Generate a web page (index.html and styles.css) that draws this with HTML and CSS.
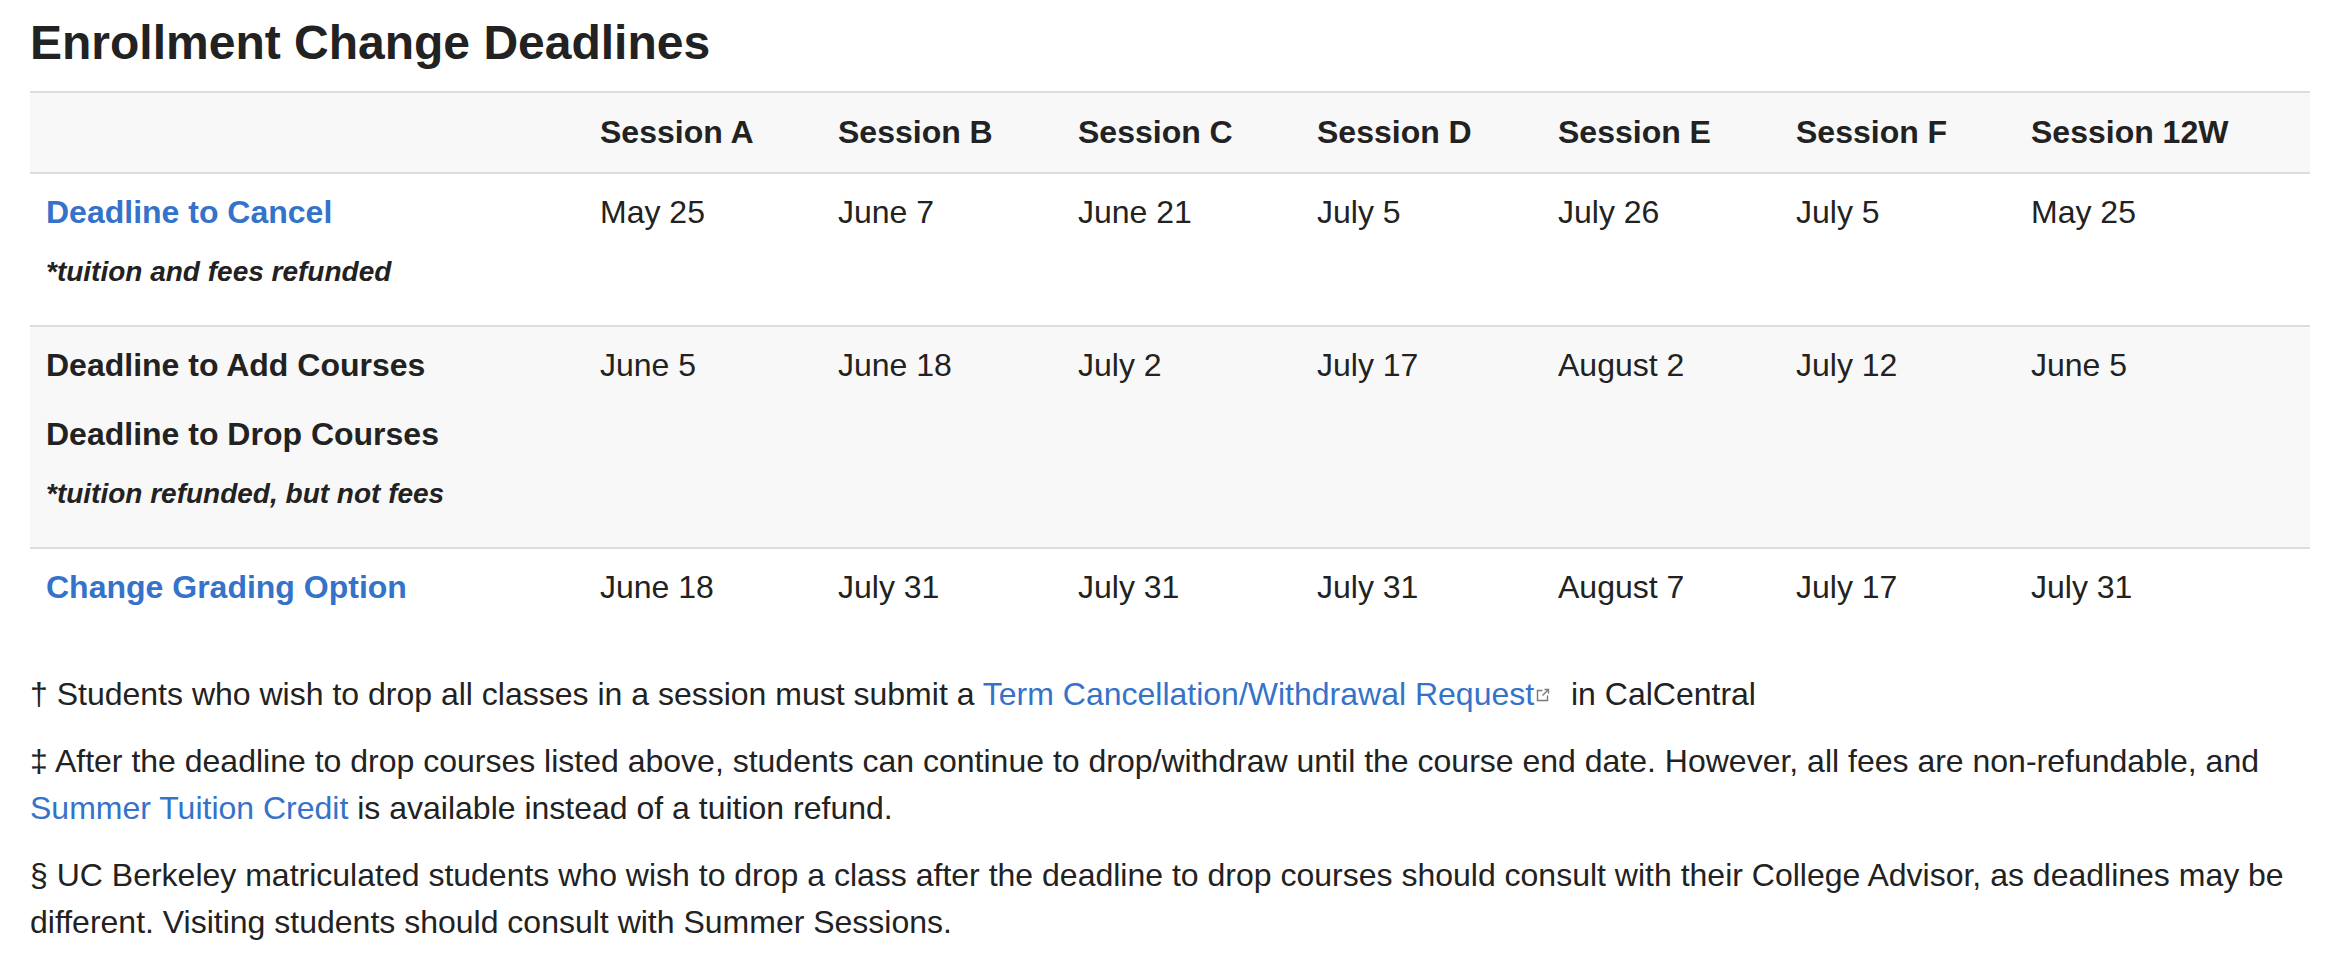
FILE: index.html
```html
<!DOCTYPE html>
<html lang="en">
<head>
<meta charset="utf-8">
<title>Enrollment Change Deadlines</title>
<link rel="stylesheet" href="styles.css">
</head>
<body>
<main class="page">
  <h2 class="title">Enrollment Change Deadlines</h2>
  <table class="deadlines">
    <colgroup>
      <col class="c-label">
      <col class="c-a"><col class="c-b"><col class="c-c"><col class="c-d"><col class="c-e"><col class="c-f"><col class="c-12w">
    </colgroup>
    <thead>
      <tr>
        <th></th>
        <th>Session A</th>
        <th>Session B</th>
        <th>Session C</th>
        <th>Session D</th>
        <th>Session E</th>
        <th>Session F</th>
        <th>Session 12W</th>
      </tr>
    </thead>
    <tbody>
      <tr class="row-first">
        <td>
          <p class="label"><a href="#" class="link">Deadline to Cancel</a></p>
          <p class="note">*tuition and fees refunded</p>
        </td>
        <td>May 25</td>
        <td>June 7</td>
        <td>June 21</td>
        <td>July 5</td>
        <td>July 26</td>
        <td>July 5</td>
        <td>May 25</td>
      </tr>
      <tr class="row-striped">
        <td>
          <p class="label">Deadline to Add Courses</p>
          <p class="label label-next">Deadline to Drop Courses</p>
          <p class="note">*tuition refunded, but not fees</p>
        </td>
        <td>June 5</td>
        <td>June 18</td>
        <td>July 2</td>
        <td>July 17</td>
        <td>August 2</td>
        <td>July 12</td>
        <td>June 5</td>
      </tr>
      <tr class="row-last">
        <td>
          <p class="label"><a href="#" class="link">Change Grading Option</a></p>
        </td>
        <td>June 18</td>
        <td>July 31</td>
        <td>July 31</td>
        <td>July 31</td>
        <td>August 7</td>
        <td>July 17</td>
        <td>July 31</td>
      </tr>
    </tbody>
  </table>

  <p class="footnote">† Students who wish to drop all classes in a session must submit a <a href="#" class="link-plain">Term Cancellation/Withdrawal Request<svg class="ext-icon" viewBox="0 0 14 14" width="14" height="14" aria-hidden="true"><path d="M6.5 2.5H1.5v10h10v-5" fill="none" stroke="#7a7a7a" stroke-width="1.4"/><path d="M8.5 1.5h4v4" fill="none" stroke="#7a7a7a" stroke-width="1.4"/><path d="M12.5 1.5L6.5 7.5" fill="none" stroke="#7a7a7a" stroke-width="1.4"/></svg></a> in CalCentral</p>
  <p class="footnote">‡ After the deadline to drop courses listed above, students can continue to drop/withdraw until the course end date. However, all fees are non-refundable, and <a href="#" class="link-plain">Summer Tuition Credit</a> is available instead of a tuition refund.</p>
  <p class="footnote">§ UC Berkeley matriculated students who wish to drop a class after the deadline to drop courses should consult with their College Advisor, as deadlines may be different. Visiting students should consult with Summer Sessions.</p>
</main>
</body>
</html>
```

FILE: styles.css
```css
html, body {
  margin: 0;
  padding: 0;
  background: #ffffff;
}

body {
  font-family: "Liberation Sans", Arial, Helvetica, sans-serif;
  font-size: 32px;
  line-height: 47px;
  color: #222222;
}

.page {
  padding: 17px 22px 0 30px;
  width: 2280px;
}

.title {
  margin: 0 0 21px 0;
  font-size: 48px;
  line-height: 52.8px;
  font-weight: bold;
  color: #222222;
}

.deadlines {
  width: 2280px;
  table-layout: fixed;
  border-collapse: separate;
  border-spacing: 0;
  margin: 0 0 47px 0;
}

.c-label { width: 554px; }
.c-a { width: 238px; }
.c-b { width: 240px; }
.c-c { width: 239px; }
.c-d { width: 241px; }
.c-e { width: 238px; }
.c-f { width: 235px; }
.c-12w { width: 295px; }

.deadlines th {
  text-align: left;
  font-weight: bold;
  font-size: 32px;
  line-height: 48px;
  padding: 15px 16px 16px 16px;
  background: #f8f8f8;
  border-top: 2px solid #dddddd;
  border-bottom: 2px solid #dddddd;
  vertical-align: top;
}

.deadlines td {
  font-size: 32px;
  line-height: 48px;
  padding: 14px 16px 13px 16px;
  vertical-align: top;
}

.row-striped td,
.row-last td {
  border-top: 2px solid #dddddd;
}

.row-striped td {
  background: #f8f8f8;
}

.label {
  margin: 0;
  font-weight: bold;
  line-height: 48px;
}

.label-next {
  margin-top: 21px;
}

.note {
  margin: 16px 0 20px 0;
  font-size: 28px;
  line-height: 40px;
  font-style: italic;
  font-weight: bold;
}

.link,
.link-plain {
  color: #3572c9;
  text-decoration: none;
}

.footnote {
  margin: 0 0 20px 0;
  font-size: 32px;
  line-height: 47px;
}

.ext-icon {
  display: inline-block;
  width: 14px;
  height: 14px;
  margin: 0 12px 0 2px;
  vertical-align: 3px;
}
```
